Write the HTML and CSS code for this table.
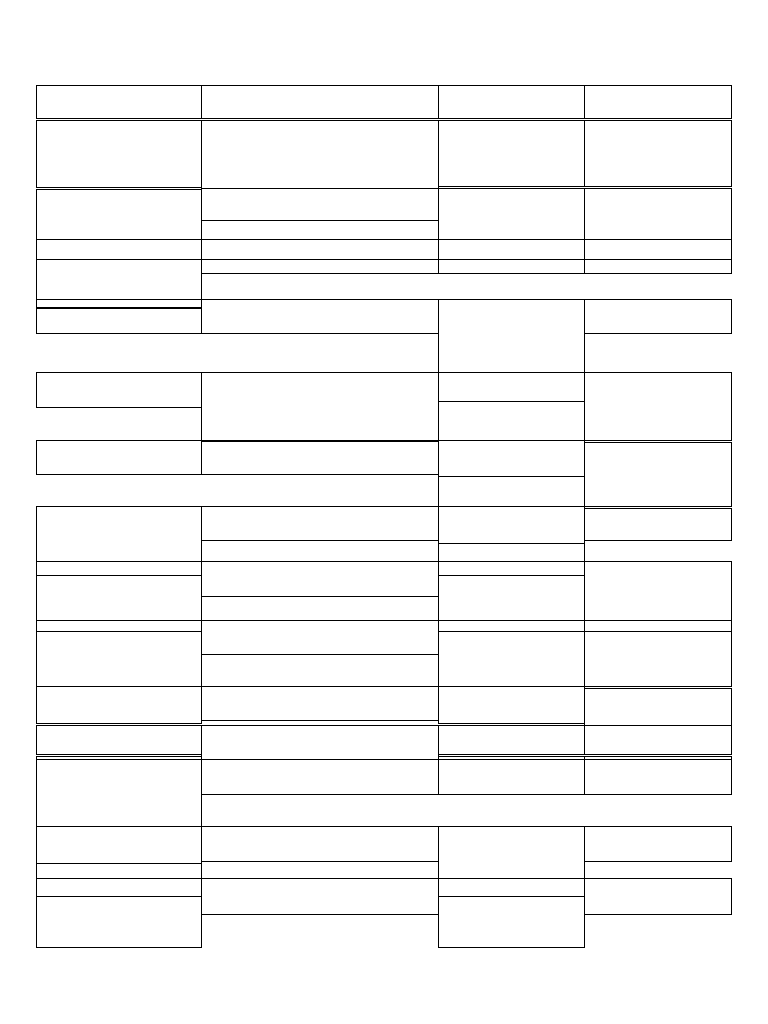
FILE: index.html
```html
<!DOCTYPE html>
<html lang="en">
<head>
<meta charset="utf-8">
<title>Grid</title>
<link rel="stylesheet" href="styles.css">
</head>
<body>
<main class="sheet">
  <section class="col">
    <div class="cell h34 m0"></div>
    <div class="cell h68 m1"></div>
    <div class="cell h51 m1"></div>
    <div class="cell h21"></div>
    <div class="cell h41"></div>
    <div class="cell h9"></div>
    <div class="cell h26 m0"></div>
    <div class="cell h36 m38"></div>
    <div class="cell h35 m32"></div>
    <div class="cell h56 m31"></div>
    <div class="cell h15"></div>
    <div class="cell h46"></div>
    <div class="cell h12"></div>
    <div class="cell h56"></div>
    <div class="cell h38"></div>
    <div class="cell h30 m1"></div>
    <div class="cell h4 m1"></div>
    <div class="cell h68"></div>
    <div class="cell h38"></div>
    <div class="cell h16"></div>
    <div class="cell h19"></div>
    <div class="cell h52"></div>
  </section>
  <section class="col">
    <div class="cell h34 m0"></div>
    <div class="cell h69 m1"></div>
    <div class="cell h33"></div>
    <div class="cell h20"></div>
    <div class="cell h21"></div>
    <div class="cell h15"></div>
    <div class="cell h35 m25"></div>
    <div class="cell h69 m38"></div>
    <div class="cell h34 m0"></div>
    <div class="cell h35 m31"></div>
    <div class="cell h22"></div>
    <div class="cell h36"></div>
    <div class="cell h25"></div>
    <div class="cell h35"></div>
    <div class="cell h33"></div>
    <div class="cell h35"></div>
    <div class="cell h35 m4"></div>
    <div class="cell h36"></div>
    <div class="cell h36 m31"></div>
    <div class="cell h18"></div>
    <div class="cell h37"></div>
  </section>
  <section class="col">
    <div class="cell h34 m0"></div>
    <div class="cell h67 m1"></div>
    <div class="cell h52 m1"></div>
    <div class="cell h21"></div>
    <div class="cell h15"></div>
    <div class="cell h74 m25"></div>
    <div class="cell h30"></div>
    <div class="cell h40"></div>
    <div class="cell h37"></div>
    <div class="cell h31"></div>
    <div class="cell h38"></div>
    <div class="cell h19"></div>
    <div class="cell h15"></div>
    <div class="cell h46"></div>
    <div class="cell h12"></div>
    <div class="cell h56"></div>
    <div class="cell h38"></div>
    <div class="cell h30 m1"></div>
    <div class="cell h4 m1"></div>
    <div class="cell h36"></div>
    <div class="cell h53 m31"></div>
    <div class="cell h19"></div>
    <div class="cell h52"></div>
  </section>
  <section class="col">
    <div class="cell h34 m0"></div>
    <div class="cell h67 m1"></div>
    <div class="cell h52 m1"></div>
    <div class="cell h21"></div>
    <div class="cell h15"></div>
    <div class="cell h35 m25"></div>
    <div class="cell h69 m38"></div>
    <div class="cell h65 m1"></div>
    <div class="cell h33 m1"></div>
    <div class="cell h60 m20"></div>
    <div class="cell h12"></div>
    <div class="cell h56"></div>
    <div class="cell h38 m1"></div>
    <div class="cell h30"></div>
    <div class="cell h4 m1"></div>
    <div class="cell h36"></div>
    <div class="cell h36 m31"></div>
    <div class="cell h37 m16"></div>
  </section>
</main>
</body>
</html>
```

FILE: styles.css
```css
html, body {
  margin: 0;
  padding: 0;
  background: #ffffff;
  font-family: "Liberation Sans", Arial, sans-serif;
}

.sheet {
  display: grid;
  grid-template-columns: 165px 237px 146px 147px;
  align-items: start;
  padding: 85px 0 0 36px;
}

.col {
  display: flex;
  flex-direction: column;
}

.cell {
  box-sizing: border-box;
  border: 1px solid #000;
  margin-top: -1px;
  margin-right: -1px;
  background: transparent;
}

.m0 { margin-top: 0; }
.m1 { margin-top: 1px; }
.m4 { margin-top: 4px; }
.m16 { margin-top: 16px; }
.m20 { margin-top: 20px; }
.m25 { margin-top: 25px; }
.m31 { margin-top: 31px; }
.m32 { margin-top: 32px; }
.m38 { margin-top: 38px; }

.h4 { height: 4px; }
.h9 { height: 9px; }
.h12 { height: 12px; }
.h15 { height: 15px; }
.h16 { height: 16px; }
.h18 { height: 18px; }
.h19 { height: 19px; }
.h20 { height: 20px; }
.h21 { height: 21px; }
.h22 { height: 22px; }
.h25 { height: 25px; }
.h26 { height: 26px; }
.h30 { height: 30px; }
.h31 { height: 31px; }
.h33 { height: 33px; }
.h34 { height: 34px; }
.h35 { height: 35px; }
.h36 { height: 36px; }
.h37 { height: 37px; }
.h38 { height: 38px; }
.h40 { height: 40px; }
.h41 { height: 41px; }
.h46 { height: 46px; }
.h51 { height: 51px; }
.h52 { height: 52px; }
.h53 { height: 53px; }
.h56 { height: 56px; }
.h60 { height: 60px; }
.h65 { height: 65px; }
.h67 { height: 67px; }
.h68 { height: 68px; }
.h69 { height: 69px; }
.h74 { height: 74px; }
```
